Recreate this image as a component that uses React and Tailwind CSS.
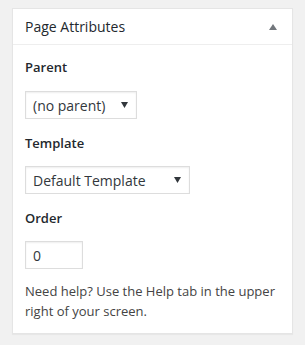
export default function App() {
  const font = { fontFamily: '"Open Sans", "Liberation Sans", sans-serif' };

  return (
    <div className="min-h-[345px] w-[305px] bg-[#f1f1f1] pt-[8px] pl-[12px]" style={font}>
      <div className="w-[281px] border border-[#e5e5e5] bg-white shadow-[0_1px_1px_rgba(0,0,0,0.04)]">
        {/* Header */}
        <div className="flex h-[36px] items-center justify-between border-b border-[#eeeeee] pl-[12px] pr-[15px]">
          <h2 className="text-[14px] leading-[1.4] text-[#23282d]">Page Attributes</h2>
          <svg width="8" height="6" viewBox="0 0 8 6" className="mt-[1px]">
            <path d="M4 0 L8 6 L0 6 Z" fill="#72777c" />
          </svg>
        </div>

        {/* Body */}
        <div className="px-[12px] pt-[12px] pb-[12px] text-[13px] text-[#444]">
          <p className="font-semibold leading-[20px] text-[#23282d]">Parent</p>
          <div className="mt-[14px] flex h-[28px] w-[112px] items-center justify-between border border-[#dddddd] bg-white pl-[7px] pr-[8px] shadow-[inset_0_1px_2px_rgba(0,0,0,0.07)]">
            <span className="text-[14px] text-[#32373c]">(no parent)</span>
            <svg width="7" height="6" viewBox="0 0 7 6">
              <path d="M0 0 L7 0 L3.5 6 Z" fill="#32373c" />
            </svg>
          </div>

          <p className="mt-[14px] font-semibold leading-[20px] text-[#23282d]">Template</p>
          <div className="mt-[13px] flex h-[28px] w-[165px] items-center justify-between border border-[#dddddd] bg-white pl-[7px] pr-[8px] shadow-[inset_0_1px_2px_rgba(0,0,0,0.07)]">
            <span className="text-[14px] text-[#32373c]">Default Template</span>
            <svg width="7" height="6" viewBox="0 0 7 6">
              <path d="M0 0 L7 0 L3.5 6 Z" fill="#32373c" />
            </svg>
          </div>

          <p className="mt-[14px] font-semibold leading-[20px] text-[#23282d]">Order</p>
          <div className="mt-[13px] flex h-[28px] w-[58px] items-center border border-[#dddddd] bg-white pl-[7px] shadow-[inset_0_1px_2px_rgba(0,0,0,0.07)]">
            <span className="text-[14px] text-[#32373c]">0</span>
          </div>

          <p className="mt-[13px] leading-[19.5px]">
            Need help? Use the Help tab in the upper right of your screen.
          </p>
        </div>
      </div>
    </div>
  );
}
